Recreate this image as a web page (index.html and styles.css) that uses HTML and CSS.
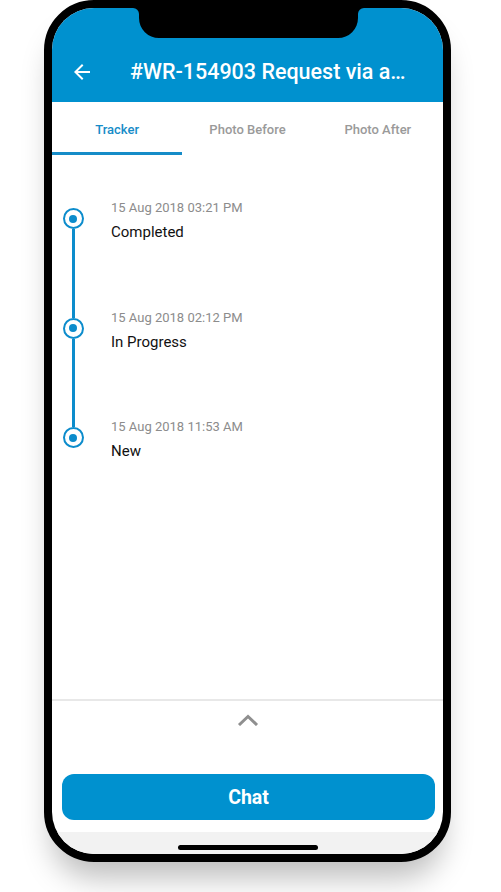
FILE: index.html
```html
<!DOCTYPE html>
<html lang="en">
<head>
<meta charset="utf-8">
<title>Request tracker</title>
<link rel="stylesheet" href="styles.css">
</head>
<body>
<div class="phone">
  <div class="screen">
    <svg class="notch" width="231" height="30" viewBox="0 0 231 30"><path d="M0 0 H231 A6 6 0 0 0 225 6 V10 A20 20 0 0 1 205 30 H26 A20 20 0 0 1 6 10 V6 A6 6 0 0 0 0 0 Z" fill="#000"/></svg>
    <header class="appbar">
      <svg class="back" width="24" height="24" viewBox="0 0 24 24"><path d="M20 11H7.83l5.59-5.59L12 4l-8 8 8 8 1.41-1.41L7.83 13H20v-2z" fill="#fff"/></svg>
      <h1 class="title">#WR-154903 Request via a…</h1>
    </header>
    <nav class="tabs">
      <div class="tab active">Tracker</div>
      <div class="tab">Photo Before</div>
      <div class="tab">Photo After</div>
    </nav>
    <main class="timeline">
      <div class="event first">
        <div class="rail"><span class="seg top"></span><span class="dot"></span><span class="seg bottom"></span></div>
        <div class="info"><div class="date">15 Aug 2018 03:21 PM</div><div class="status">Completed</div></div>
      </div>
      <div class="event">
        <div class="rail"><span class="seg top"></span><span class="dot"></span><span class="seg bottom"></span></div>
        <div class="info"><div class="date">15 Aug 2018 02:12 PM</div><div class="status">In Progress</div></div>
      </div>
      <div class="event last">
        <div class="rail"><span class="seg top"></span><span class="dot"></span><span class="seg bottom"></span></div>
        <div class="info"><div class="date">15 Aug 2018 11:53 AM</div><div class="status">New</div></div>
      </div>
    </main>
    <section class="sheet">
      <div class="handle"><svg width="22" height="12" viewBox="0 0 22 12"><polyline points="2,11 11,2.5 20,11" fill="none" stroke="#8f8f8f" stroke-width="3"/></svg></div>
      <button class="chat">Chat</button>
      <div class="homebar"><span class="indicator"></span></div>
    </section>
  </div>
</div>
</body>
</html>
```
FILE: styles.css
```css
* { box-sizing: border-box; }
html, body { margin: 0; padding: 0; background: #fff; }
body { width: 501px; height: 892px; overflow: hidden; font-family: Roboto, "Liberation Sans", sans-serif; }

.phone {
  margin-left: 44px;
  width: 407px;
  height: 862px;
  border: 8px solid #000;
  border-radius: 50px;
  background: #000;
  box-shadow: 0 24px 30px -8px rgba(0,0,0,0.26);
}
.screen {
  position: relative;
  width: 391px;
  height: 846px;
  border-radius: 42px;
  overflow: hidden;
  background: #fff;
  display: flex;
  flex-direction: column;
}
.notch { position: absolute; top: 0; left: 81px; }

.appbar {
  height: 94px;
  background: #0091cf;
  padding: 42px 0 8px 18px;
  display: flex;
  align-items: center;
  gap: 36px;
  flex-shrink: 0;
}
.back { display: block; flex-shrink: 0; }
.title {
  margin: 0;
  color: #fff;
  font-size: 21.5px;
  font-weight: 500;
  white-space: nowrap;
  line-height: 44px;
}

.tabs { display: flex; flex-shrink: 0; }
.tab {
  flex: 1;
  height: 53px;
  padding-top: 4px;
  border-bottom: 3px solid transparent;
  display: flex;
  align-items: center;
  justify-content: center;
  font-size: 13px;
  font-weight: 500;
  color: #9a9a9a;
}
.tab.active { color: #168cc8; border-bottom-color: #168cc8; }

.timeline { flex: 1; padding-top: 34px; }
.event { display: flex; height: 109.5px; }
.rail {
  width: 22px;
  margin-left: 10px;
  display: flex;
  flex-direction: column;
  align-items: center;
}
.seg { width: 3px; background: #0c8ccc; }
.seg.top { height: 19px; }
.seg.bottom { flex: 1; }
.first .seg.top, .last .seg.bottom { background: transparent; }
.dot {
  width: 21px;
  height: 21px;
  border: 2.5px solid #0c8ccc;
  border-radius: 50%;
  background: #fff;
  display: flex;
  align-items: center;
  justify-content: center;
  flex-shrink: 0;
}
.dot::after {
  content: "";
  width: 8px;
  height: 8px;
  border-radius: 50%;
  background: #0c8ccc;
}
.info { margin-left: 27px; padding-top: 11px; }
.date { font-size: 13px; line-height: 16px; color: #8c8c8c; }
.status { margin-top: 6px; font-size: 15px; line-height: 20px; color: #111; }

.sheet { border-top: 2px solid #e8e8e8; flex-shrink: 0; display: flex; flex-direction: column; }
.handle { padding-top: 13px; height: 25px; display: flex; justify-content: center; }
.handle svg { display: block; }
.chat {
  margin: 48px 8px 12px 10px;
  height: 46px;
  border: 0;
  border-radius: 12px;
  background: #0091cf;
  color: #fff;
  font-family: Roboto, "Liberation Sans", sans-serif;
  font-size: 19.5px;
  font-weight: 700;
}
.homebar { height: 22px; background: #f2f2f2; display: flex; justify-content: center; padding-top: 13px; }
.indicator { width: 140px; height: 5px; border-radius: 3px; background: #000; }
```
